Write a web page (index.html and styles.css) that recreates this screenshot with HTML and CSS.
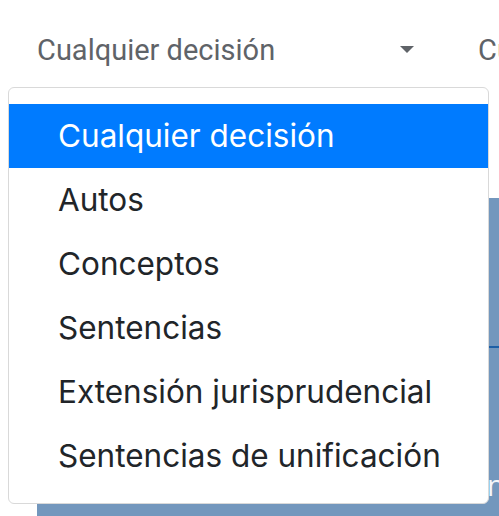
FILE: index.html
```html
<!DOCTYPE html>
<html lang="es">
<head>
<meta charset="utf-8">
<link rel="stylesheet" href="styles.css">
</head>
<body>
<div class="page">
  <div class="filters">
    <div class="select">
      <span class="select-value">Cualquier decisión</span>
      <span class="caret"></span>
    </div>
    <div class="select select-second">
      <span class="select-value">Cualquier</span>
    </div>
  </div>
  <div class="panel">
    <div class="panel-top"></div>
    <div class="panel-line"></div>
    <div class="panel-bottom"><span class="panel-text">na</span></div>
  </div>
  <ul class="menu">
    <li class="item active">Cualquier decisión</li>
    <li class="item">Autos</li>
    <li class="item">Conceptos</li>
    <li class="item">Sentencias</li>
    <li class="item">Extensión jurisprudencial</li>
    <li class="item">Sentencias de unificación</li>
  </ul>
</div>
</body>
</html>
```
FILE: styles.css
```css
* { box-sizing: border-box; }
html, body { margin: 0; padding: 0; background: #fff; overflow: hidden; }
.page { position: relative; width: 499px; height: 516px; overflow: hidden; }
.filters {
  display: flex;
  padding-left: 37px;
  height: 198px;
  padding-top: 31px;
  white-space: nowrap;
}
.select {
  display: flex;
  align-items: flex-start;
  width: 441px;
  flex-shrink: 0;
  font-family: Roboto, "Liberation Sans", sans-serif;
  font-size: 29px;
  line-height: 38px;
  color: #5f6368;
}
.select-value { flex: 1; }
.caret {
  width: 0; height: 0;
  margin: 15px 64px 0 0;
  border-left: 7px solid transparent;
  border-right: 7px solid transparent;
  border-top: 7px solid #5f6368;
}
.panel {
  margin-left: 37px;
  background: #7397bd;
  height: 318px;
  display: flex;
  flex-direction: column;
}
.panel-top { height: 148px; }
.panel-line { height: 2px; background: #1d5fa6; }
.panel-bottom { flex: 1; padding: 117px 0 0 450px; }
.panel-text {
  font-family: "Open Sans", sans-serif;
  font-size: 29px;
  color: #f4f6fa;
}
.menu {
  position: absolute;
  top: 87px;
  left: 8px;
  width: 481px;
  height: 417px;
  margin: 0;
  padding: 16px 0;
  list-style: none;
  background: #fff;
  border: 1px solid #d9d9d9;
  border-radius: 6px;
  font-family: Inter, "Noto Sans", sans-serif;
  font-size: 31.5px;
  color: #212529;
}
.item {
  height: 64px;
  line-height: 64px;
  padding-left: 49px;
  white-space: nowrap;
}
.item.active { background: #007bff; color: #fff; }
```
